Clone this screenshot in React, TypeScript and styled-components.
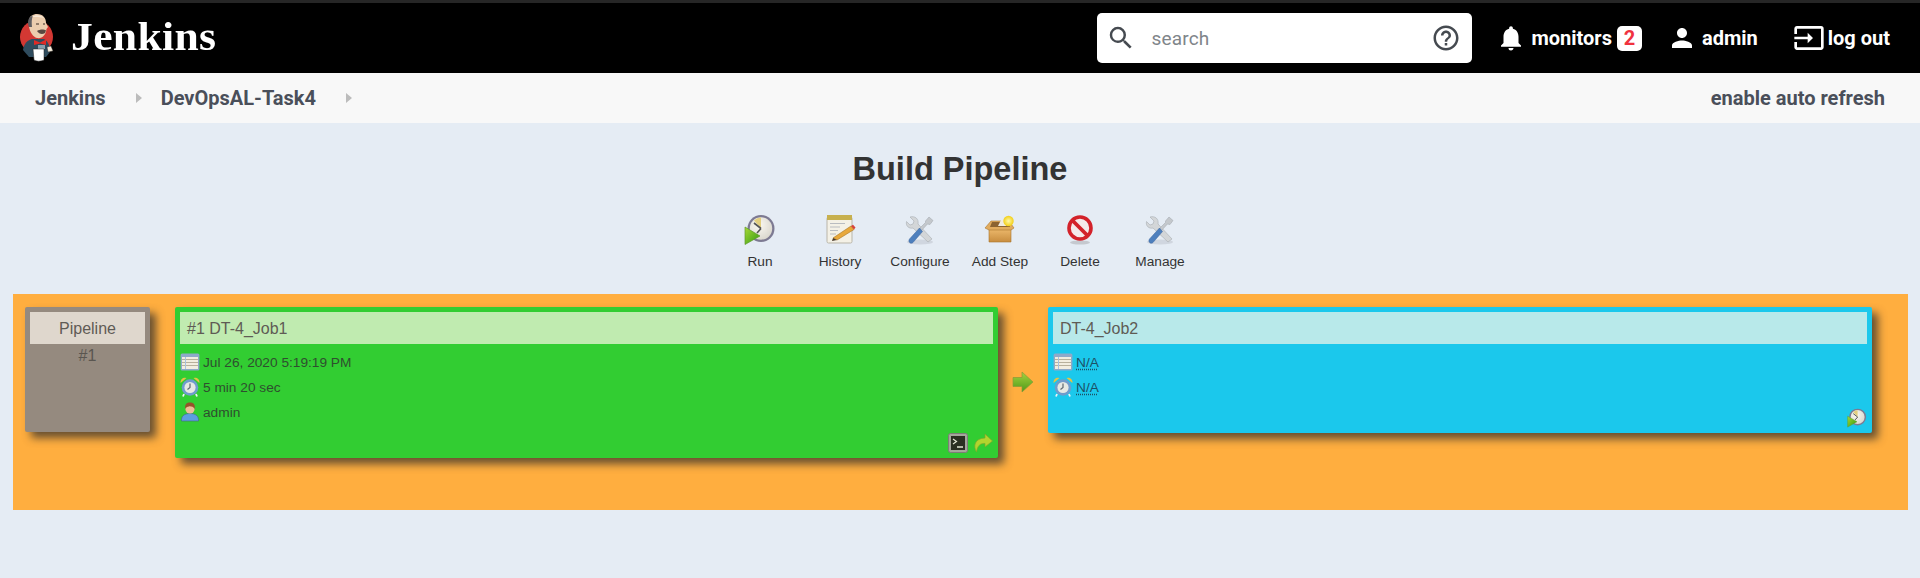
import React from "react";
import styled, { createGlobalStyle } from "styled-components";
import { MdSearch, MdHelpOutline, MdNotifications, MdPerson, MdInput } from "react-icons/md";

const Global = createGlobalStyle`
  html, body { margin: 0; padding: 0; height: 578px; overflow: hidden; background: #e5ecf4; }
  body { font-family: "Liberation Sans", Arial, sans-serif; }
`;

const TopBar = styled.header`
  box-sizing: border-box; height: 73px; background: #000; border-top: 3px solid #262626;
  display: flex; align-items: center; color: #fff; font-family: Roboto, sans-serif;
`;
const Brand = styled.div`
  display: flex; align-items: center; padding-left: 19px; flex: 1;
`;
const Wordmark = styled.span`
  font-family: "Liberation Serif", serif; font-weight: 700; font-size: 40px; letter-spacing: .3px;
  margin-left: 15px; line-height: 48px; position: relative; top: -1px;
  transform: scaleX(1.09); transform-origin: left center;
`;
const SearchBox = styled.div`
  box-sizing: border-box; width: 375px; height: 50px; background: #fff; border-radius: 5px;
  display: flex; align-items: center; padding: 0 11px 0 9px; color: #454a50;
`;
const SearchText = styled.span`
  flex: 1; margin-left: 15px; font-size: 19px; color: #80858a; letter-spacing: .2px;
`;
const NavItem = styled.div<{ $ml: number }>`
  display: flex; align-items: center; margin-left: ${p => p.$ml}px; font-weight: 700; font-size: 20px;
`;
const NavLabel = styled.span<{ $ml: number; $mr?: number }>`
  margin-left: ${p => p.$ml}px; margin-right: ${p => p.$mr ?? 0}px;
`;
const Badge = styled.span`
  box-sizing: border-box; width: 25px; height: 25px; margin-left: 5px; border-radius: 5px;
  background: #fff; color: #f0323f; font-size: 20px; font-weight: 700;
  display: flex; align-items: center; justify-content: center;
`;
const Crumbs = styled.nav`
  box-sizing: border-box; height: 50px; background: #f8f8f8; display: flex; align-items: center;
  padding: 0 35px 0 35px; color: #4a4f5a; font: 700 20px Roboto, sans-serif;
`;
const Crumb = styled.span``;
const Caret = styled.i`
  width: 0; height: 0; margin: 0 19px 0 30px; border-left: 6px solid #bcbcbc;
  border-top: 5.5px solid transparent; border-bottom: 5.5px solid transparent;
`;
const Refresh = styled.span`margin-left: auto;`;
const Title = styled.h1`
  margin: 0; padding-top: 28px; text-align: center; font: 700 32.5px/37px "Liberation Sans", Arial, sans-serif; color: #333;
`;
const Tools = styled.div`
  display: flex; justify-content: center; margin-top: 26px; height: 80px;
`;
const Tool = styled.div`
  width: 80px; display: flex; flex-direction: column; align-items: center;
  font-size: 13.7px; color: #333; line-height: 16px;
  svg { display: block; margin-bottom: 8px; filter: blur(.35px); }
`;
const Area = styled.section`
  box-sizing: border-box; margin: 0 12px 0 13px; height: 216px; background: #ffae3f;
  padding: 13px 12px; display: flex; align-items: flex-start;
`;
const Card = styled.div<{ $bg: string; $h: number; $w: number }>`
  position: relative; box-sizing: border-box; flex: none; width: ${p => p.$w}px; height: ${p => p.$h}px;
  background: ${p => p.$bg}; border-radius: 2px; padding: 5px;
  box-shadow: 6px 6px 8px rgba(60, 52, 45, .78);
  color: #333; font-size: 16px;
`;
const CardHead = styled.div<{ $bg: string; $center?: boolean }>`
  height: 32px; background: ${p => p.$bg}; color: #5f5b55; line-height: 33px;
  padding-left: ${p => (p.$center ? 0 : 7)}px; text-align: ${p => (p.$center ? "center" : "left")};
`;
const Num = styled.div`
  text-align: center; color: #5a5650; line-height: 22px; margin-top: 1px;
`;
const Rows = styled.div`
  margin-top: 8px; display: flex; flex-direction: column; gap: 5px;
`;
const Row = styled.div`
  height: 20px; display: flex; align-items: center; gap: 3px; font-size: 13.7px; color: #2f4f2f;
  svg { filter: blur(.25px); flex: none; }
`;
const NA = styled.span`
  color: #1c5066; text-decoration: underline dotted; text-underline-offset: 2px;
`;
const Corner = styled.div`
  position: absolute; right: 5px; bottom: 5px; display: flex; gap: 5px; align-items: center;
  svg { filter: blur(.25px); }
`;
const Gap = styled.div<{ $w: number }>`
  flex: none; width: ${p => p.$w}px;
`;
const ArrowSlot = styled.div`
  flex: none; width: 50px; height: 150px; display: flex; justify-content: center; align-items: center;
  svg { filter: blur(.3px); }
`;

type IP = { s?: number };
const IconClock = ({ s = 32 }: IP) => (
  <svg width={s} height={s} viewBox="0 0 32 32">
    <defs><radialGradient id="cf" cx=".4" cy=".35" r=".8"><stop offset="0" stopColor="#fbf9f2" /><stop offset="1" stopColor="#d5d2c8" /></radialGradient>
      <linearGradient id="cg" x1="0" y1="0" x2="1" y2="1"><stop offset="0" stopColor="#a9d936" /><stop offset="1" stopColor="#2f9a10" /></linearGradient></defs>
    <circle cx="17" cy="14.5" r="13.5" fill="#7d7a92" />
    <circle cx="17" cy="14.5" r="11.2" fill="url(#cf)" />
    <path d="M17 14.5 L10 6.5 A11 11 0 0 1 17 3.5Z" fill="#e3cf7e" />
    <path d="M17 14.5 L10 9 M17 14.5 L13 19" stroke="#555" strokeWidth="1.6" />
    <path d="M1 13 L16 22 L1 30.5Z" fill="url(#cg)" stroke="#5f9a2c" strokeWidth=".7" />
  </svg>
);
const IconNote = ({ s = 32 }: IP) => (
  <svg width={s} height={s} viewBox="0 0 32 32">
    <rect x="3" y="3" width="25" height="26" rx="1.5" fill="#f4f1e6" stroke="#b9b5a8" />
    <rect x="3" y="1" width="25" height="5" fill="#c7b04e" />
    <path d="M6 9.5h15M6 13h10M6 16.5h8M6 20h6" stroke="#b9bcc0" />
    <path d="M9 24 L27 12 L30 15.5 L13 26 Z" fill="#e8a83a" stroke="#a77420" strokeWidth=".6" />
    <path d="M27 12 L30 15.5 L31.5 13.5 L29 10.8Z" fill="#d8433a" />
    <path d="M9 24 L8 27 L13 26Z" fill="#4b3a28" />
  </svg>
);
const IconTools = ({ s = 32 }: IP) => (
  <svg width={s} height={s} viewBox="0 0 32 32">
    <ellipse cx="16" cy="28" rx="13" ry="2.5" fill="#aab0b8" opacity=".35" />
    <path d="M6 3 L10 7 L9 10 L6 11 L2.5 7.5 C1.5 12 5 15 9 14 L24 28 L28 25 L14 10 C15 5 11 1.5 6 3Z" fill="#d3d6d8" stroke="#a8adb2" strokeWidth=".6" />
    <path d="M25 3 L29 6.5 L26 10.5 L23.5 10 L17 17 L15 15 L21.5 8.5 L21.5 7Z" fill="#c4c8cc" stroke="#9da2a8" strokeWidth=".5" />
    <path d="M15.5 14 L18.5 17.5 L9 28.5 C7 30.5 3.5 28 5.5 25Z" fill="#4d7fbd" stroke="#3a659c" strokeWidth=".5" />
  </svg>
);
const IconBox = ({ s = 32 }: IP) => (
  <svg width={s} height={s} viewBox="0 0 32 32">
    <defs><linearGradient id="bx" x1="0" y1="0" x2="0" y2="1"><stop offset="0" stopColor="#ecb86b" /><stop offset="1" stopColor="#c88d3f" /></linearGradient>
      <radialGradient id="bl"><stop offset="0" stopColor="#fff9a8" /><stop offset="1" stopColor="#f2cf16" /></radialGradient></defs>
    <path d="M5 15 H27 V28 H5Z" fill="url(#bx)" stroke="#a9762e" strokeWidth=".6" />
    <path d="M1 14 L7 7 H25 L30 14 L27 16 H5Z" fill="#e2ac5e" stroke="#a9762e" strokeWidth=".6" />
    <path d="M8 8 H24 L26 13 H6Z" fill="#8c6330" />
    <path d="M14 12 L17 6 L24 6 L22 12Z" fill="#f1ece0" />
    <circle cx="24.5" cy="7" r="5.2" fill="url(#bl)" />
  </svg>
);
const IconNo = ({ s = 32 }: IP) => (
  <svg width={s} height={s} viewBox="0 0 32 32">
    <ellipse cx="16" cy="28.5" rx="10" ry="2" fill="#8a8a8a" opacity=".35" />
    <circle cx="16" cy="14" r="11" fill="#f4eaea" stroke="#d3222a" strokeWidth="3.6" />
    <path d="M8.5 6.5 L23.5 21.5" stroke="#d3222a" strokeWidth="3.8" />
  </svg>
);
const IconCal = ({ s = 20 }: IP) => (
  <svg width={s} height={s} viewBox="0 0 20 20">
    <rect x=".6" y="1.6" width="18.8" height="16.8" rx="1.5" fill="#8fa9c9" />
    <rect x="2" y="5" width="16" height="12" fill="#f2ede0" />
    <path d="M2 7.5h16M2 10.5h16M2 13.5h16" stroke="#b8b09c" />
    <path d="M5.5 5v12" stroke="#a9c2e0" />
  </svg>
);
const IconAlarm = ({ s = 20 }: IP) => (
  <svg width={s} height={s} viewBox="0 0 20 20">
    <path d="M.6 6 A4.5 4.5 0 0 1 6.5 1Z M19.4 6 A4.5 4.5 0 0 0 13.5 1Z" fill="#e3c344" />
    <path d="M4 17 L3 19.5 M16 17 L17 19.5" stroke="#eef2f5" strokeWidth="1.8" />
    <circle cx="10" cy="10.5" r="8.3" fill="#6f9ccc" />
    <circle cx="10" cy="10.5" r="5.6" fill="#e6e9e4" />
    <path d="M10 6.5V10.5L7.5 12.5" stroke="#5e6870" strokeWidth="1.2" fill="none" />
  </svg>
);
const IconUser = ({ s = 20 }: IP) => (
  <svg width={s} height={s} viewBox="0 0 20 20">
    <path d="M1.5 19 C1 14 4.5 11.5 10 11.5 S19 14 18.5 19Z" fill="#5c9ee0" stroke="#45628c" strokeWidth=".6" />
    <circle cx="10" cy="7" r="4.6" fill="#edbe98" />
    <path d="M5.3 7 C4.5 2 7 .6 10 .6 S15.5 2 14.7 7 C13.5 4.8 11 4.2 9 4.4 C7 4.6 6 5.5 5.3 7Z" fill="#96522a" />
  </svg>
);
const IconTerm = ({ s = 20 }: IP) => (
  <svg width={s} height={s} viewBox="0 0 20 20">
    <rect x=".5" y=".5" width="19" height="19" rx="2" fill="#a5a69c" stroke="#7d7d76" />
    <rect x="3" y="3" width="14" height="14" fill="#2b3022" />
    <path d="M5 6 L8.5 8.5 L5 11" stroke="#e5e8d5" strokeWidth="1.2" fill="none" />
    <path d="M9 14h6" stroke="#e5e8d5" strokeWidth="1.5" />
  </svg>
);
const IconRedo = ({ s = 20 }: IP) => (
  <svg width={s} height={s} viewBox="0 0 20 20">
    <path d="M12 1 L19.5 8 L12 14 V10.5 C7 10 4.5 13 3.5 19 C0 13 1.5 5.5 12 5Z" fill="#b2d52e" stroke="#7fa72a" strokeWidth=".7" />
  </svg>
);
const IconGo = () => (
  <svg width="22" height="22" viewBox="0 0 22 22">
    <defs><linearGradient id="go" x1="0" y1="0" x2="0" y2="1"><stop offset="0" stopColor="#a5d23e" /><stop offset="1" stopColor="#4f9a1a" /></linearGradient></defs>
    <path d="M1 6.5 H10 V1 L21 11 L10 21 V15.5 H1Z" fill="url(#go)" stroke="#8a9a3a" strokeWidth=".7" />
  </svg>
);
const Logo = () => (
  <svg width="37" height="48" viewBox="0 0 37 48">
    <circle cx="17.5" cy="23" r="16.5" fill="#d33833" />
    <path d="M4 36 C5 29 9 26 13 25 L25 25 C29 27 31 32 31 38 L27 43 H10Z" fill="#2f4c5e" />
    <path d="M10 7 C10 2 14 0 18 0 C24 0 27 4 27 9 L29 13 L27.5 15 C27 21 23 25 18 24 C14 23 11 18 10 13Z" fill="#eccdae" />
    <path d="M10 13 C8 8 9 3 14 1.5 C12.5 5 12.5 9 13 13Z" fill="#5f5d60" />
    <path d="M13 3 C16 .5 22 .5 25 4 C20 2.5 16 3 13 3Z" fill="#f7e8d6" />
    <path d="M17 10h3M24 10h2" stroke="#3a2c25" strokeWidth="1.2" />
    <path d="M18 17 C21 15 25 15 27 16.5 L26 19 C23 21 20 20 18 17Z" fill="#5a4740" />
    <path d="M15 26 L21 28.5 L27 25.5 L27 31 L21 29.5 L15 31Z" fill="#e02a25" />
    <path d="M19 31 H26 V35 H19Z" fill="#8aa0ad" />
    <path d="M14 35 H25 V46 C22 47.5 17 47.5 15 46Z" fill="#fff" stroke="#222" strokeWidth=".5" />
    <path d="M28 33 L32 32 L34 37 L29 38Z" fill="#f3ead9" stroke="#222" strokeWidth=".4" />
  </svg>
);

const tools: [string, React.ReactNode][] = [
  ["Run", <IconClock />], ["History", <IconNote />], ["Configure", <IconTools />],
  ["Add Step", <IconBox />], ["Delete", <IconNo />], ["Manage", <IconTools />],
];

export default function App() {
  return (
    <>
      <Global />
      <TopBar>
        <Brand><Logo /><Wordmark>Jenkins</Wordmark></Brand>
        <SearchBox>
          <MdSearch size={30} />
          <SearchText>search</SearchText>
          <MdHelpOutline size={30} />
        </SearchBox>
        <NavItem $ml={24}><MdNotifications size={30} /><NavLabel $ml={5}>monitors</NavLabel><Badge>2</Badge></NavItem>
        <NavItem $ml={25}><MdPerson size={30} /><NavLabel $ml={5}>admin</NavLabel></NavItem>
        <NavItem $ml={35}><MdInput size={32} /><NavLabel $ml={3} $mr={30}>log out</NavLabel></NavItem>
      </TopBar>
      <Crumbs>
        <Crumb>Jenkins</Crumb><Caret /><Crumb>DevOpsAL-Task4</Crumb><Caret />
        <Refresh>enable auto refresh</Refresh>
      </Crumbs>
      <Title>Build Pipeline</Title>
      <Tools>
        {tools.map(([l, i]) => <Tool key={l}>{i}<span>{l}</span></Tool>)}
      </Tools>
      <Area>
        <Card $bg="#958a7f" $h={125} $w={125}>
          <CardHead $bg="#dfd7cd" $center>Pipeline</CardHead>
          <Num>#1</Num>
        </Card>
        <Gap $w={25} />
        <Card $bg="#32cd32" $h={151} $w={823}>
          <CardHead $bg="#c0ebb0">#1 DT-4_Job1</CardHead>
          <Rows>
            <Row><IconCal /><span>Jul 26, 2020 5:19:19 PM</span></Row>
            <Row><IconAlarm /><span>5 min 20 sec</span></Row>
            <Row><IconUser /><span>admin</span></Row>
          </Rows>
          <Corner><IconTerm /><IconRedo /></Corner>
        </Card>
        <ArrowSlot><IconGo /></ArrowSlot>
        <Card $bg="#1bc8ec" $h={126} $w={824}>
          <CardHead $bg="#b8e9ea">DT-4_Job2</CardHead>
          <Rows>
            <Row><IconCal /><NA>N/A</NA></Row>
            <Row><IconAlarm /><NA>N/A</NA></Row>
          </Rows>
          <Corner><IconClock s={20} /></Corner>
        </Card>
      </Area>
    </>
  );
}
